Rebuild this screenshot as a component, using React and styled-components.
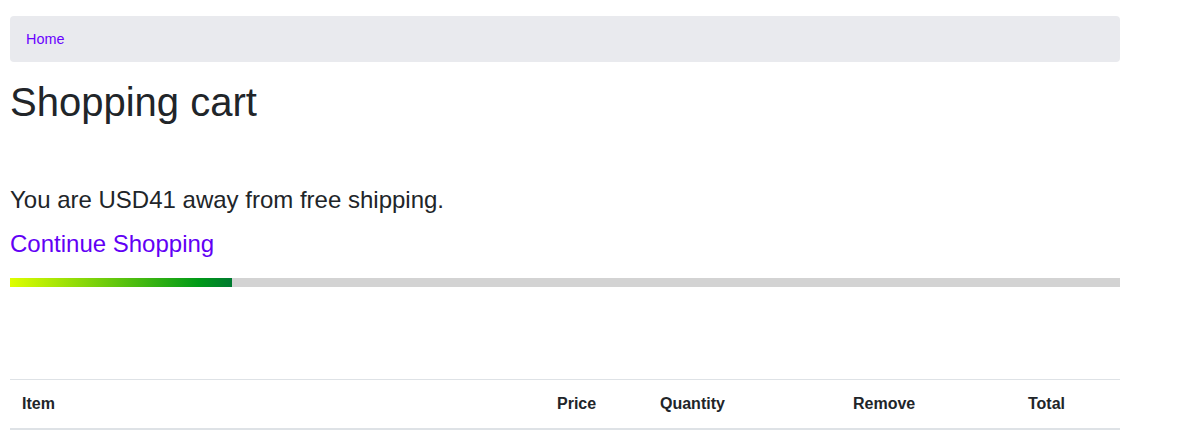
import styled, { createGlobalStyle } from "styled-components";

const Global = createGlobalStyle`
  body {
    margin: 0;
    font-family: "Liberation Sans", Arial, sans-serif;
    color: #212529;
    background: #fff;
  }
`;

const Page = styled.div`
  width: 1110px;
  margin: 16px 0 0 10px;
`;

const Breadcrumb = styled.nav`
  background: #e9eaee;
  border-radius: 4px;
  padding: 13px 16px 11px;
  font-size: 14.4px;
  line-height: 1.5;
  margin-bottom: 16px;
  a {
    color: #6a00ff;
    text-decoration: none;
  }
`;

const Title = styled.h1`
  font-size: 40px;
  font-weight: 400;
  line-height: 1.2;
  margin: 0 0 60px;
`;

const Notice = styled.h4`
  font-size: 24px;
  font-weight: 400;
  line-height: 1.2;
  margin: 0 0 16px;
`;

const ContinueLink = styled.a`
  display: block;
  font-size: 24px;
  line-height: 1.2;
  color: #6200f5;
  text-decoration: none;
  margin-bottom: 19px;
`;

const Bar = styled.div`
  height: 9px;
  background: #d3d3d3;
  margin-bottom: 92px;
`;

const Fill = styled.div`
  height: 100%;
  background: linear-gradient(to right, #dfff00, #009a18 85%, #007a30);
`;

const Table = styled.table`
  width: 100%;
  border-collapse: collapse;
  th {
    text-align: left;
    font-size: 16px;
    font-weight: 700;
    line-height: 24px;
    padding: 12px;
    border-top: 1px solid #dee2e6;
    border-bottom: 2px solid #dee2e6;
  }
`;

const cols = [
  ["Item", 535],
  ["Price", 103],
  ["Quantity", 193],
  ["Remove", 175],
  ["Total", 104],
];

export default function App() {
  const progress = 20;
  return (
    <>
      <Global />
      <Page>
        <Breadcrumb>
          <a href="#">Home</a>
        </Breadcrumb>
        <Title>Shopping cart</Title>
        <Notice>You are USD41 away from free shipping.</Notice>
        <ContinueLink href="#">Continue Shopping</ContinueLink>
        <Bar>
          <Fill style={{ width: `${progress}%` }} />
        </Bar>
        <Table>
          <colgroup>
            {cols.map(([n, w]) => (
              <col key={n} style={{ width: w }} />
            ))}
          </colgroup>
          <thead>
            <tr>
              {cols.map(([n]) => (
                <th key={n}>{n}</th>
              ))}
            </tr>
          </thead>
        </Table>
      </Page>
    </>
  );
}
